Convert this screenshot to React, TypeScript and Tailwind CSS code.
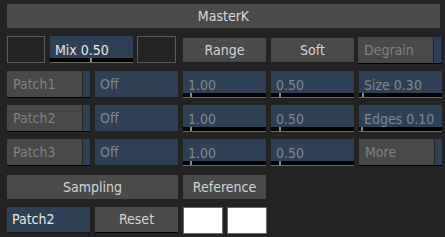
import React from 'react';

// MasterK keyer panel

const FONT = "font-['DejaVu_Sans_Condensed','DejaVu_Sans',sans-serif] [font-stretch:condensed]";

const Button = ({ label, className = '' }: { label: string; className?: string }) => (
  <div
    className={`flex h-[24px] shrink-0 items-center justify-center bg-[#4a4a4a] text-[14px] text-[#d4d4d4] ${className}`}
  >
    {label}
  </div>
);

// gray toggle with the blue strip on its right, as in Patch1 / Degrain
const Toggle = ({ label, w }: { label: string; w: string }) => (
  <div className="flex h-[27px] shrink-0 flex-col">
    <div className="flex flex-1 gap-[1px]">
      <div className={`flex items-center bg-[#484848] pl-[6px] text-[14px] text-[#828282] ${w}`}>{label}</div>
      <div className="w-[7px] bg-[#2d4055]" />
    </div>
    <div className="h-[1px] bg-black" />
  </div>
);

const Slider = ({
  label,
  tick,
  bright = false,
  w = 'w-[83px]',
}: {
  label: string;
  tick: string;
  bright?: boolean;
  w?: string;
}) => (
  <div className={`flex h-[27px] shrink-0 flex-col ${w}`}>
    <div
      className={`flex flex-1 items-end bg-[#2d4055] pb-[1px] pl-[5px] text-[14px] leading-none ${
        bright ? 'text-[#e6e6e6]' : 'text-[#7f8894]'
      }`}
    >
      {label}
    </div>
    <div className={`flex h-[4px] bg-black ${tick}`}>
      <div className="w-[2px] bg-[#8a8a8a]" />
    </div>
    <div className="h-[1px] bg-[#6a6a6a]" />
  </div>
);

const Field = ({ label }: { label: string }) => (
  <div className="flex h-[27px] w-[83px] shrink-0 items-center border-b border-[#1a2430] bg-[#2d4055] pl-[5px] text-[14px] text-[#7f8894]">
    {label}
  </div>
);

const Box = ({ w }: { w: string }) => (
  <div className={`h-[27px] shrink-0 border border-[#5c5c5c] bg-[#232323] ${w}`} />
);

const PatchRow = ({ n, top }: { n: number; top: string }) => (
  <div className={`flex gap-[5px] ${top}`}>
    <Toggle label={`Patch${n}`} w="w-[75px]" />
    <Field label="Off" />
    <Slider label="1.00" tick="pl-[7px]" />
    <Slider label="0.50" tick="pl-[8px]" />
    {n === 1 && <Slider label="Size 0.30" tick="pl-[3px]" />}
    {n === 2 && <Slider label="Edges 0.10" tick="pl-[2px]" />}
    {n === 3 && <Toggle label="More" w="w-[75px]" />}
  </div>
);

export default function App() {
  return (
    <div className={`h-[237px] w-[445px] overflow-hidden bg-[#232323] pl-[7px] pt-[4px] ${FONT}`}>
      <div className="flex h-[24px] w-[433px] items-center justify-center bg-[#4a4a4a] text-[14px] text-[#d8d8d8]">
        MasterK
      </div>

      <div className="mt-[8px] flex">
        <Box w="w-[38px]" />
        <div className="ml-[5px] shrink-0">
          <Slider label="Mix 0.50" tick="pl-[40px]" bright />
        </div>
        <div className="ml-[4px] shrink-0">
          <Box w="w-[39px]" />
        </div>
        <div className="ml-[7px] mt-[2px] shrink-0">
          <Button label="Range" className="w-[83px]" />
        </div>
        <div className="ml-[5px] mt-[2px] shrink-0">
          <Button label="Soft" className="w-[83px]" />
        </div>
        <div className="ml-[4px] mt-[1px] shrink-0">
          <Toggle label="Degrain" w="w-[75px]" />
        </div>
      </div>

      <PatchRow n={1} top="mt-[7px]" />
      <PatchRow n={2} top="mt-[7px]" />
      <PatchRow n={3} top="mt-[7px]" />

      <div className="mt-[9px] flex gap-[5px]">
        <Button label="Sampling" className="w-[171px]" />
        <Button label="Reference" className="w-[83px] bg-[#3f3f3f] text-[#c4c4c4]" />
      </div>

      <div className="mt-[8px] flex gap-[5px]">
        <div className="flex h-[26px] w-[83px] shrink-0 items-center border-b border-[#151c24] bg-[#2d4055] pl-[5px] text-[14px] text-[#e6e6e6]">
          Patch2
        </div>
        <Button label="Reset" className="h-[26px] w-[83px] border-b border-black" />
        <div className="flex shrink-0 gap-[4px]">
          <div className="h-[27px] w-[40px] border border-[#6a6a6a] bg-white" />
          <div className="h-[27px] w-[40px] border border-[#6a6a6a] bg-white" />
        </div>
      </div>
    </div>
  );
}
